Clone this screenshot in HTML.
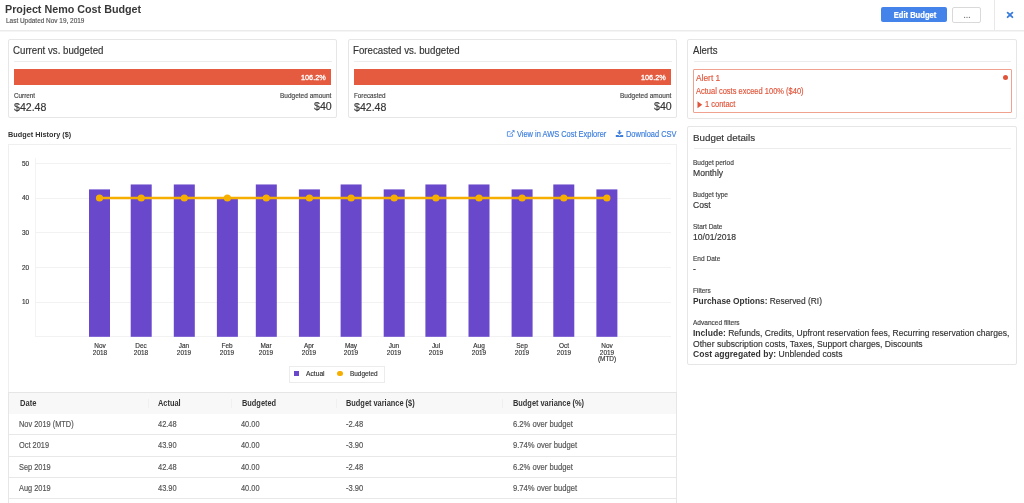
<!DOCTYPE html>
<html><head><meta charset="utf-8">
<style>
*{box-sizing:border-box;margin:0;padding:0}
html,body{width:1024px;height:503px;overflow:hidden;background:#fff}
body{position:relative;font-family:"Liberation Sans",sans-serif;color:#333}
.a{position:absolute}
.t{position:absolute;line-height:1;white-space:nowrap;-webkit-text-stroke:0.15px currentColor;will-change:transform}
b{-webkit-text-stroke:0}
</style></head><body>
<div class="t" style="left:5.40px;top:4px;font-size:10.75px;font-weight:bold;-webkit-text-stroke:0;color:#383838;">Project Nemo Cost Budget</div>
<div class="t" style="left:5.50px;top:18px;font-size:6.45px;color:#555;transform-origin:0 5px;transform:scaleY(1.1);">Last Updated Nov 19, 2019</div>
<div class="a" style="left:881px;top:7px;width:66px;height:15.2px;background:#4483e9;border-radius:2px;"></div>
<div class="t" style="left:814.50px;width:200px;text-align:center;top:12px;font-size:7.6px;font-weight:bold;-webkit-text-stroke:0;color:#fff;transform-origin:0 6px;transform:scaleY(1.1);-webkit-text-stroke:0.2px #fff;">Edit Budget</div>
<div class="a" style="left:952px;top:6.7px;width:29px;height:16px;border:1px solid #d9d9d9;border-radius:2px;background:#fff;"></div>
<svg class="a" style="left:960px;top:14px" width="14" height="6" viewBox="960 14 14 6"><g fill="#6a6a6a"><circle cx="964.6" cy="17.3" r="0.65"/><circle cx="967.0" cy="17.3" r="0.65"/><circle cx="969.4" cy="17.3" r="0.65"/></g></svg>
<div class="a" style="left:994px;top:0px;width:1px;height:31px;background:#e8e8e8;"></div>
<svg class="a" style="left:1005px;top:10px" width="10" height="10" viewBox="0 0 10 10"><path d="M2.6 2.6 L7.4 7.2 M7.4 2.6 L2.6 7.2" stroke="#3b7ddd" stroke-width="1.8" stroke-linecap="round"/></svg>
<div class="a" style="left:0px;top:30px;width:1024px;height:1px;background:#ebebeb;"></div>
<div class="a" style="left:0px;top:31px;width:1024px;height:1px;background:#f5f5f5;"></div>
<div class="a" style="left:8px;top:39px;width:329px;height:79px;border:1px solid #e6e6e6;border-radius:2px;background:#fff;"></div>
<div class="t" style="left:13.20px;top:46px;font-size:9.7px;color:#333;transform-origin:0 8px;transform:scaleY(1.1);">Current vs. budgeted</div>
<div class="a" style="left:14px;top:61px;width:317.5px;height:1px;background:#ececec;"></div>
<div class="a" style="left:14px;top:69px;width:317px;height:16px;background:#e55b40;"></div>
<div class="t" style="right:698.50px;text-align:right;top:74px;font-size:7.3px;color:#fff;transform-origin:0 6px;transform:scaleY(1.1);-webkit-text-stroke:0.3px #fff;">106.2%</div>
<div class="t" style="left:13.80px;top:93px;font-size:6.3px;color:#444;transform-origin:0 5px;transform:scaleY(1.05);">Current</div>
<div class="t" style="left:14.30px;top:102px;font-size:10.6px;color:#333;">$42.48</div>
<div class="t" style="right:692.40px;text-align:right;top:93px;font-size:6.5px;color:#444;transform-origin:0 5px;transform:scaleY(1.05);">Budgeted amount</div>
<div class="t" style="right:692.70px;text-align:right;top:101px;font-size:10.6px;color:#333;">$40</div>
<div class="a" style="left:348px;top:39px;width:329px;height:79px;border:1px solid #e6e6e6;border-radius:2px;background:#fff;"></div>
<div class="t" style="left:353.20px;top:46px;font-size:9.7px;color:#333;transform-origin:0 8px;transform:scaleY(1.1);">Forecasted vs. budgeted</div>
<div class="a" style="left:354px;top:61px;width:317.5px;height:1px;background:#ececec;"></div>
<div class="a" style="left:354px;top:69px;width:317px;height:16px;background:#e55b40;"></div>
<div class="t" style="right:358.50px;text-align:right;top:74px;font-size:7.3px;color:#fff;transform-origin:0 6px;transform:scaleY(1.1);-webkit-text-stroke:0.3px #fff;">106.2%</div>
<div class="t" style="left:353.80px;top:93px;font-size:6.3px;color:#444;transform-origin:0 5px;transform:scaleY(1.05);">Forecasted</div>
<div class="t" style="left:354.30px;top:102px;font-size:10.6px;color:#333;">$42.48</div>
<div class="t" style="right:352.40px;text-align:right;top:93px;font-size:6.5px;color:#444;transform-origin:0 5px;transform:scaleY(1.05);">Budgeted amount</div>
<div class="t" style="right:352.70px;text-align:right;top:101px;font-size:10.6px;color:#333;">$40</div>
<div class="a" style="left:687px;top:39px;width:330px;height:80px;border:1px solid #e6e6e6;border-radius:2px;background:#fff;"></div>
<div class="t" style="left:693.20px;top:46px;font-size:9.6px;color:#333;transform-origin:0 8px;transform:scaleY(1.1);">Alerts</div>
<div class="a" style="left:694px;top:61px;width:317px;height:1px;background:#ececec;"></div>
<div class="a" style="left:693px;top:69px;width:318.5px;height:43.5px;border:1px solid #f0a190;border-radius:1px;"></div>
<div class="t" style="left:696.00px;top:74px;font-size:8.4px;color:#e0553a;transform-origin:0 7px;transform:scaleY(1.05);">Alert 1</div>
<div class="a" style="left:1002.7px;top:74.8px;width:5.4px;height:5.4px;border-radius:50%;background:#e0553a;"></div>
<div class="t" style="left:696.00px;top:88px;font-size:7.5px;color:#e0553a;transform-origin:0 6px;transform:scaleY(1.15);">Actual costs exceed 100% ($40)</div>
<svg class="a" style="left:697px;top:100.5px" width="7" height="8"><path d="M0.5 0.2 L5.2 3.7 L0.5 7.2Z" fill="#e0553a"/></svg>
<div class="t" style="left:705.40px;top:101px;font-size:7.5px;color:#e0553a;transform-origin:0 6px;transform:scaleY(1.15);">1 contact</div>
<div class="a" style="left:687px;top:126px;width:330px;height:239px;border:1px solid #e6e6e6;border-radius:2px;background:#fff;"></div>
<div class="t" style="left:693.00px;top:133px;font-size:9.8px;color:#333;">Budget details</div>
<div class="a" style="left:694px;top:148px;width:317px;height:1px;background:#ececec;"></div>
<div class="t" style="left:693.20px;top:160px;font-size:6.55px;color:#444;">Budget period</div>
<div class="t" style="left:693.00px;top:169px;font-size:8.6px;color:#333;transform-origin:0 7px;transform:scaleY(1.05);">Monthly</div>
<div class="t" style="left:693.20px;top:192px;font-size:6.55px;color:#444;">Budget type</div>
<div class="t" style="left:693.00px;top:201px;font-size:8.6px;color:#333;transform-origin:0 7px;transform:scaleY(1.05);">Cost</div>
<div class="t" style="left:693.20px;top:224px;font-size:6.55px;color:#444;">Start Date</div>
<div class="t" style="left:693.00px;top:233px;font-size:8.6px;color:#333;transform-origin:0 7px;transform:scaleY(1.05);">10/01/2018</div>
<div class="t" style="left:693.20px;top:256px;font-size:6.55px;color:#444;">End Date</div>
<div class="t" style="left:693.00px;top:265px;font-size:8.6px;color:#333;transform-origin:0 7px;transform:scaleY(1.05);">-</div>
<div class="t" style="left:693.20px;top:288px;font-size:6.55px;color:#444;">Filters</div>
<div class="t" style="left:693.00px;top:297px;font-size:8.4px;color:#333;transform-origin:0 7px;transform:scaleY(1.05);"><b>Purchase Options:</b> Reserved (RI)</div>
<div class="t" style="left:693.20px;top:320px;font-size:6.55px;color:#444;">Advanced filters</div>
<div class="t" style="left:693.00px;top:329px;font-size:8.55px;color:#333;transform-origin:0 7px;transform:scaleY(1.05);"><b>Include:</b> Refunds, Credits, Upfront reservation fees, Recurring reservation charges,</div>
<div class="t" style="left:693.00px;top:340px;font-size:8.6px;color:#333;transform-origin:0 7px;transform:scaleY(1.05);">Other subscription costs, Taxes, Support charges, Discounts</div>
<div class="t" style="left:693.00px;top:350px;font-size:8.6px;color:#333;transform-origin:0 7px;transform:scaleY(1.05);"><b>Cost aggregated by:</b> Unblended costs</div>
<div class="t" style="left:8.00px;top:131px;font-size:7.3px;font-weight:bold;-webkit-text-stroke:0;color:#333;transform-origin:0 6px;transform:scaleY(1.1);">Budget History ($)</div>
<svg class="a" style="left:500px;top:125px" width="30" height="15" viewBox="500 125 30 15"><path d="M510.4 131.7 H507.4 V136.3 H512.6 V133.8" fill="none" stroke="#5a92ea" stroke-width="0.95"/><path d="M510.4 134.2 L513 131.6" stroke="#3b7ddd" stroke-width="1.0" stroke-linecap="round"/><path d="M512 130.3 H514.5 V132.8Z" fill="#3b7ddd"/></svg>
<div class="t" style="left:517.20px;top:131px;font-size:7.45px;color:#3b7ddd;transform-origin:0 6px;transform:scaleY(1.1);">View in AWS Cost Explorer</div>
<svg class="a" style="left:610px;top:125px" width="20" height="15" viewBox="610 125 20 15"><path d="M619.5 130.2 V133" stroke="#3b7ddd" stroke-width="1.5"/><path d="M617 132.2 H622 L619.5 134.8Z" fill="#3b7ddd"/><path d="M615.8 134.9 H618.4 L619.5 135.9 L620.6 134.9 H623.2 V136.9 H615.8Z" fill="#3b7ddd"/></svg>
<div class="t" style="left:626.30px;top:131px;font-size:7.45px;color:#3b7ddd;transform-origin:0 6px;transform:scaleY(1.1);">Download CSV</div>
<div class="a" style="left:8px;top:144px;width:669px;height:260px;border:1px solid #efefef;border-bottom:none;"></div>
<div class="a" style="left:35px;top:158px;width:1px;height:179px;background:#f3f3f3;"></div>
<div class="a" style="left:35px;top:336.3px;width:636px;height:1px;background:#f2f2f2;"></div>
<div class="a" style="left:35px;top:301.6px;width:636px;height:1px;background:#f2f2f2;"></div>
<div class="t" style="right:994.60px;text-align:right;top:299px;font-size:6.45px;color:#333;">10</div>
<div class="a" style="left:35px;top:266.9px;width:636px;height:1px;background:#f2f2f2;"></div>
<div class="t" style="right:994.60px;text-align:right;top:265px;font-size:6.45px;color:#333;">20</div>
<div class="a" style="left:35px;top:232.2px;width:636px;height:1px;background:#f2f2f2;"></div>
<div class="t" style="right:994.60px;text-align:right;top:230px;font-size:6.45px;color:#333;">30</div>
<div class="a" style="left:35px;top:197.5px;width:636px;height:1px;background:#f2f2f2;"></div>
<div class="t" style="right:994.60px;text-align:right;top:195px;font-size:6.45px;color:#333;">40</div>
<div class="a" style="left:35px;top:162.8px;width:636px;height:1px;background:#f2f2f2;"></div>
<div class="t" style="right:994.60px;text-align:right;top:161px;font-size:6.45px;color:#333;">50</div>
<svg class="a" style="left:0;top:0" width="1024" height="503"><rect x="89.00" y="189.39" width="21" height="147.41" fill="#6948cc"/><rect x="130.70" y="184.47" width="21" height="152.33" fill="#6948cc"/><rect x="173.80" y="184.47" width="21" height="152.33" fill="#6948cc"/><rect x="216.89" y="199.04" width="21" height="137.76" fill="#6948cc"/><rect x="255.81" y="184.47" width="21" height="152.33" fill="#6948cc"/><rect x="298.91" y="189.39" width="21" height="147.41" fill="#6948cc"/><rect x="340.61" y="184.47" width="21" height="152.33" fill="#6948cc"/><rect x="383.70" y="189.39" width="21" height="147.41" fill="#6948cc"/><rect x="425.40" y="184.47" width="21" height="152.33" fill="#6948cc"/><rect x="468.50" y="184.47" width="21" height="152.33" fill="#6948cc"/><rect x="511.59" y="189.39" width="21" height="147.41" fill="#6948cc"/><rect x="553.29" y="184.47" width="21" height="152.33" fill="#6948cc"/><rect x="596.39" y="189.39" width="21" height="147.41" fill="#6948cc"/><polyline points="99.50,198 141.20,198 184.30,198 227.39,198 266.31,198 309.41,198 351.11,198 394.20,198 435.90,198 479.00,198 522.09,198 563.79,198 606.89,198" fill="none" stroke="#f6af00" stroke-width="2.6"/><circle cx="99.50" cy="198" r="3.6" fill="#f6af00"/><circle cx="141.20" cy="198" r="3.6" fill="#f6af00"/><circle cx="184.30" cy="198" r="3.6" fill="#f6af00"/><circle cx="227.39" cy="198" r="3.6" fill="#f6af00"/><circle cx="266.31" cy="198" r="3.6" fill="#f6af00"/><circle cx="309.41" cy="198" r="3.6" fill="#f6af00"/><circle cx="351.11" cy="198" r="3.6" fill="#f6af00"/><circle cx="394.20" cy="198" r="3.6" fill="#f6af00"/><circle cx="435.90" cy="198" r="3.6" fill="#f6af00"/><circle cx="479.00" cy="198" r="3.6" fill="#f6af00"/><circle cx="522.09" cy="198" r="3.6" fill="#f6af00"/><circle cx="563.79" cy="198" r="3.6" fill="#f6af00"/><circle cx="606.89" cy="198" r="3.6" fill="#f6af00"/></svg>
<div class="t" style="left:-0.50px;width:200px;text-align:center;top:343px;font-size:6.45px;color:#333;">Nov</div>
<div class="t" style="left:-0.50px;width:200px;text-align:center;top:350px;font-size:6.45px;color:#333;">2018</div>
<div class="t" style="left:41.20px;width:200px;text-align:center;top:343px;font-size:6.45px;color:#333;">Dec</div>
<div class="t" style="left:41.20px;width:200px;text-align:center;top:350px;font-size:6.45px;color:#333;">2018</div>
<div class="t" style="left:84.30px;width:200px;text-align:center;top:343px;font-size:6.45px;color:#333;">Jan</div>
<div class="t" style="left:84.30px;width:200px;text-align:center;top:350px;font-size:6.45px;color:#333;">2019</div>
<div class="t" style="left:127.39px;width:200px;text-align:center;top:343px;font-size:6.45px;color:#333;">Feb</div>
<div class="t" style="left:127.39px;width:200px;text-align:center;top:350px;font-size:6.45px;color:#333;">2019</div>
<div class="t" style="left:166.31px;width:200px;text-align:center;top:343px;font-size:6.45px;color:#333;">Mar</div>
<div class="t" style="left:166.31px;width:200px;text-align:center;top:350px;font-size:6.45px;color:#333;">2019</div>
<div class="t" style="left:209.41px;width:200px;text-align:center;top:343px;font-size:6.45px;color:#333;">Apr</div>
<div class="t" style="left:209.41px;width:200px;text-align:center;top:350px;font-size:6.45px;color:#333;">2019</div>
<div class="t" style="left:251.11px;width:200px;text-align:center;top:343px;font-size:6.45px;color:#333;">May</div>
<div class="t" style="left:251.11px;width:200px;text-align:center;top:350px;font-size:6.45px;color:#333;">2019</div>
<div class="t" style="left:294.20px;width:200px;text-align:center;top:343px;font-size:6.45px;color:#333;">Jun</div>
<div class="t" style="left:294.20px;width:200px;text-align:center;top:350px;font-size:6.45px;color:#333;">2019</div>
<div class="t" style="left:335.90px;width:200px;text-align:center;top:343px;font-size:6.45px;color:#333;">Jul</div>
<div class="t" style="left:335.90px;width:200px;text-align:center;top:350px;font-size:6.45px;color:#333;">2019</div>
<div class="t" style="left:379.00px;width:200px;text-align:center;top:343px;font-size:6.45px;color:#333;">Aug</div>
<div class="t" style="left:379.00px;width:200px;text-align:center;top:350px;font-size:6.45px;color:#333;">2019</div>
<div class="t" style="left:422.09px;width:200px;text-align:center;top:343px;font-size:6.45px;color:#333;">Sep</div>
<div class="t" style="left:422.09px;width:200px;text-align:center;top:350px;font-size:6.45px;color:#333;">2019</div>
<div class="t" style="left:463.79px;width:200px;text-align:center;top:343px;font-size:6.45px;color:#333;">Oct</div>
<div class="t" style="left:463.79px;width:200px;text-align:center;top:350px;font-size:6.45px;color:#333;">2019</div>
<div class="t" style="left:506.89px;width:200px;text-align:center;top:343px;font-size:6.45px;color:#333;">Nov</div>
<div class="t" style="left:506.89px;width:200px;text-align:center;top:350px;font-size:6.45px;color:#333;">2019</div>
<div class="t" style="left:506.89px;width:200px;text-align:center;top:356px;font-size:6.45px;color:#333;">(MTD)</div>
<div class="a" style="left:289px;top:366px;width:96px;height:16.5px;border:1px solid #ececec;"></div>
<div class="a" style="left:293.8px;top:371.2px;width:5.2px;height:5px;background:#6948cc;"></div>
<div class="t" style="left:305.50px;top:371px;font-size:6.7px;color:#333;">Actual</div>
<div class="a" style="left:337.2px;top:370.6px;width:5.8px;height:5.8px;border-radius:50%;background:#f6af00;"></div>
<div class="t" style="left:349.50px;top:371px;font-size:6.45px;color:#333;">Budgeted</div>
<div class="a" style="left:8px;top:392px;width:669px;height:111px;border:1px solid #e6e6e6;border-bottom:none;"></div>
<div class="a" style="left:9px;top:393px;width:667px;height:20.6px;background:#f8f8f8;"></div>
<div class="a" style="left:147.5px;top:398.5px;width:1px;height:9px;background:#f0f0f0;"></div>
<div class="a" style="left:230.5px;top:398.5px;width:1px;height:9px;background:#f0f0f0;"></div>
<div class="a" style="left:335.5px;top:398.5px;width:1px;height:9px;background:#f0f0f0;"></div>
<div class="a" style="left:502px;top:398.5px;width:1px;height:9px;background:#f0f0f0;"></div>
<div class="t" style="left:19.70px;top:400px;font-size:7.55px;font-weight:bold;-webkit-text-stroke:0;color:#333;transform-origin:0 6px;transform:scaleY(1.17);">Date</div>
<div class="t" style="left:158.40px;top:400px;font-size:7.4px;font-weight:bold;-webkit-text-stroke:0;color:#333;transform-origin:0 6px;transform:scaleY(1.17);">Actual</div>
<div class="t" style="left:241.50px;top:400px;font-size:7.4px;font-weight:bold;-webkit-text-stroke:0;color:#333;transform-origin:0 6px;transform:scaleY(1.17);">Budgeted</div>
<div class="t" style="left:345.70px;top:400px;font-size:7.4px;font-weight:bold;-webkit-text-stroke:0;color:#333;transform-origin:0 6px;transform:scaleY(1.17);">Budget variance ($)</div>
<div class="t" style="left:513.40px;top:400px;font-size:7.4px;font-weight:bold;-webkit-text-stroke:0;color:#333;transform-origin:0 6px;transform:scaleY(1.17);">Budget variance (%)</div>
<div class="a" style="left:9px;top:434.4px;width:667px;height:1px;background:#e8e8e8;"></div>
<div class="a" style="left:9px;top:455.7px;width:667px;height:1px;background:#e8e8e8;"></div>
<div class="a" style="left:9px;top:477px;width:667px;height:1px;background:#e8e8e8;"></div>
<div class="a" style="left:9px;top:498.3px;width:667px;height:1px;background:#e8e8e8;"></div>
<div class="t" style="left:18.80px;top:421px;font-size:7.4px;color:#555;transform-origin:0 6px;transform:scaleY(1.17);">Nov 2019 (MTD)</div>
<div class="t" style="left:157.80px;top:421px;font-size:7.45px;color:#555;transform-origin:0 6px;transform:scaleY(1.17);">42.48</div>
<div class="t" style="left:241.00px;top:421px;font-size:7.4px;color:#555;transform-origin:0 6px;transform:scaleY(1.17);">40.00</div>
<div class="t" style="left:345.50px;top:421px;font-size:7.6px;color:#555;transform-origin:0 6px;transform:scaleY(1.17);">-2.48</div>
<div class="t" style="left:513.00px;top:421px;font-size:7.65px;color:#555;transform-origin:0 6px;transform:scaleY(1.17);">6.2% over budget</div>
<div class="t" style="left:18.80px;top:442px;font-size:7.4px;color:#555;transform-origin:0 6px;transform:scaleY(1.17);">Oct 2019</div>
<div class="t" style="left:157.80px;top:442px;font-size:7.45px;color:#555;transform-origin:0 6px;transform:scaleY(1.17);">43.90</div>
<div class="t" style="left:241.00px;top:442px;font-size:7.4px;color:#555;transform-origin:0 6px;transform:scaleY(1.17);">40.00</div>
<div class="t" style="left:345.50px;top:442px;font-size:7.6px;color:#555;transform-origin:0 6px;transform:scaleY(1.17);">-3.90</div>
<div class="t" style="left:513.00px;top:442px;font-size:7.65px;color:#555;transform-origin:0 6px;transform:scaleY(1.17);">9.74% over budget</div>
<div class="t" style="left:18.80px;top:464px;font-size:7.4px;color:#555;transform-origin:0 6px;transform:scaleY(1.17);">Sep 2019</div>
<div class="t" style="left:157.80px;top:464px;font-size:7.45px;color:#555;transform-origin:0 6px;transform:scaleY(1.17);">42.48</div>
<div class="t" style="left:241.00px;top:464px;font-size:7.4px;color:#555;transform-origin:0 6px;transform:scaleY(1.17);">40.00</div>
<div class="t" style="left:345.50px;top:464px;font-size:7.6px;color:#555;transform-origin:0 6px;transform:scaleY(1.17);">-2.48</div>
<div class="t" style="left:513.00px;top:464px;font-size:7.65px;color:#555;transform-origin:0 6px;transform:scaleY(1.17);">6.2% over budget</div>
<div class="t" style="left:18.80px;top:485px;font-size:7.4px;color:#555;transform-origin:0 6px;transform:scaleY(1.17);">Aug 2019</div>
<div class="t" style="left:157.80px;top:485px;font-size:7.45px;color:#555;transform-origin:0 6px;transform:scaleY(1.17);">43.90</div>
<div class="t" style="left:241.00px;top:485px;font-size:7.4px;color:#555;transform-origin:0 6px;transform:scaleY(1.17);">40.00</div>
<div class="t" style="left:345.50px;top:485px;font-size:7.6px;color:#555;transform-origin:0 6px;transform:scaleY(1.17);">-3.90</div>
<div class="t" style="left:513.00px;top:485px;font-size:7.65px;color:#555;transform-origin:0 6px;transform:scaleY(1.17);">9.74% over budget</div>
</body></html>
